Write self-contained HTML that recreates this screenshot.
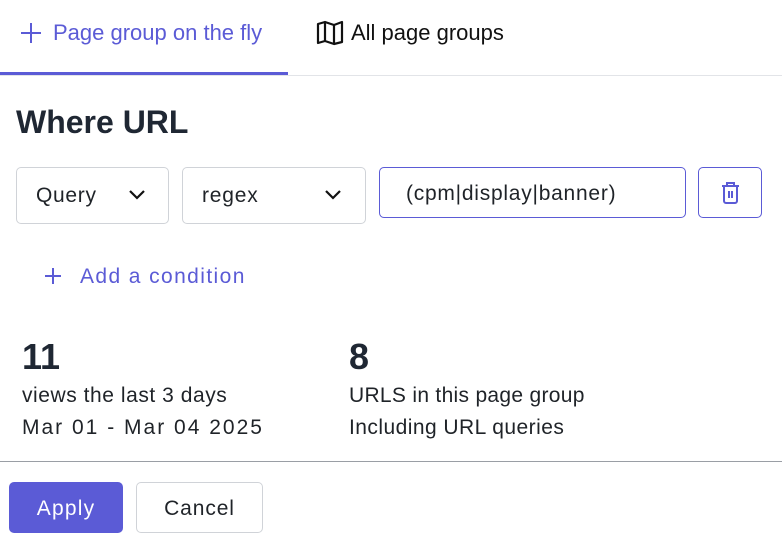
<!DOCTYPE html>
<html><head><style>
body{margin:0;width:782px;height:546px;background:#fff;font-family:"Liberation Sans",sans-serif;position:relative;overflow:hidden;color:#1f2328}
.a{position:absolute}
.box{position:absolute;border:1px solid #d0d3d8;border-radius:5px;box-sizing:border-box}
</style></head><body>
<div class="a" style="left:0;top:75px;width:782px;height:1px;background:#e2e4e8"></div>
<div class="a" style="left:0;top:72px;width:288px;height:3px;background:#5b5bd6"></div>
<svg class="a" style="left:20px;top:22px" width="22" height="22" viewBox="0 0 22 22"><path d="M11 1v20M1 11h20" stroke="#5b5bd6" stroke-width="2"/></svg>
<div class="a" style="left:53px;top:20px;font-size:22px;color:#5b5bd6">Page group on the fly</div>
<svg class="a" style="left:316px;top:20px" width="28" height="26" viewBox="0 0 28 26"><path d="M2 4l7-2 9 3 8-3v20l-8 2-9-3-7 2z M9 2v19 M18 5v19" fill="none" stroke="#111" stroke-width="2.2" stroke-linejoin="round"/></svg>
<div class="a" style="left:351px;top:20px;font-size:22px;color:#111">All page groups</div>
<div class="a" style="left:16px;top:104px;font-size:32px;font-weight:bold;color:#1f2733">Where URL</div>
<div class="box" style="left:16px;top:167px;width:153px;height:57px"></div>
<div class="a" style="left:36px;top:184px;font-size:21px;letter-spacing:0.7px">Query</div>
<svg class="a" style="left:128px;top:189px" width="18" height="12"><path d="M2 2l7 7 7-7" fill="none" stroke="#111" stroke-width="2.2"/></svg>
<div class="box" style="left:182px;top:167px;width:184px;height:57px"></div>
<div class="a" style="left:202px;top:184px;font-size:21px;letter-spacing:0.8px">regex</div>
<svg class="a" style="left:324px;top:189px" width="18" height="12"><path d="M2 2l7 7 7-7" fill="none" stroke="#111" stroke-width="2.2"/></svg>
<div class="box" style="left:379px;top:167px;width:307px;height:51px;border-color:#5b5bd6"></div>
<div class="a" style="left:406px;top:182px;font-size:21px;letter-spacing:0.75px">(cpm|display|banner)</div>
<div class="box" style="left:698px;top:167px;width:64px;height:51px;border-color:#5b5bd6"></div>
<svg class="a" style="left:720px;top:181px" width="22" height="24" viewBox="0 0 22 24"><path d="M2 5h17M7 5V2h7v3M4 5v15a2 2 0 0 0 2 2h9a2 2 0 0 0 2-2V5M9 10v7M12 10v7" fill="none" stroke="#5b5bd6" stroke-width="2"/></svg>
<svg class="a" style="left:44px;top:267px" width="18" height="18"><path d="M9 1v16M1 9h16" stroke="#5b5bd6" stroke-width="2"/></svg>
<div class="a" style="left:80px;top:265px;font-size:21px;color:#5b5bd6;letter-spacing:1.4px">Add a condition</div>
<div class="a" style="left:22px;top:336px;font-size:36px;font-weight:bold;color:#1f2733">11</div>
<div class="a" style="left:22px;top:384px;font-size:21px;letter-spacing:0.55px">views the last 3 days</div>
<div class="a" style="left:22px;top:416px;font-size:21px;letter-spacing:2px">Mar 01 - Mar 04 2025</div>
<div class="a" style="left:349px;top:336px;font-size:36px;font-weight:bold;color:#1f2733">8</div>
<div class="a" style="left:349px;top:384px;font-size:21px;letter-spacing:0.3px">URLS in this page group</div>
<div class="a" style="left:349px;top:416px;font-size:21px;letter-spacing:0.45px">Including URL queries</div>
<div class="a" style="left:0;top:461px;width:782px;height:1px;background:#9a9ea5"></div>
<div class="a" style="left:9px;top:482px;width:114px;height:51px;background:#5b5bd6;border-radius:5px;color:#fff;font-size:21px;text-align:center;line-height:53px;letter-spacing:1.2px">Apply</div>
<div class="box" style="left:136px;top:482px;width:127px;height:51px;font-size:21px;text-align:center;line-height:51px;letter-spacing:0.9px">Cancel</div>
</body></html>
